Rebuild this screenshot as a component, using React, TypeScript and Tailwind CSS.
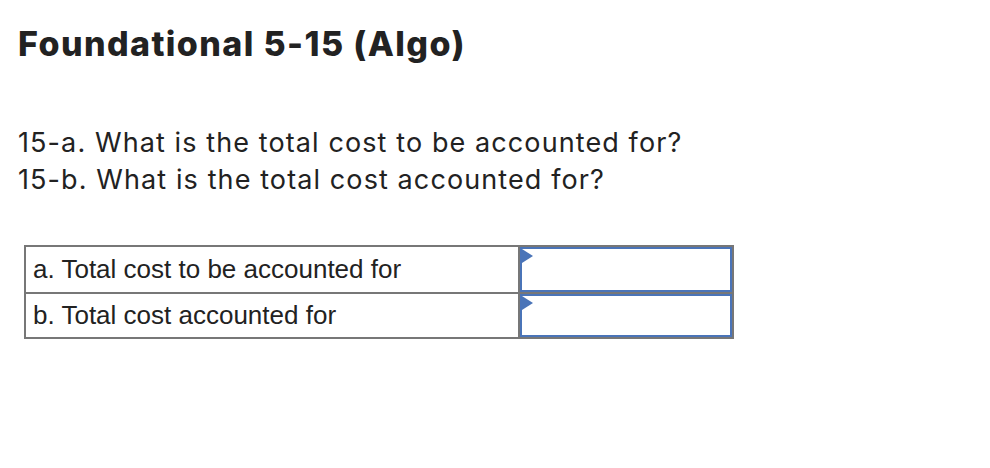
export default function App() {
    const rows = [
        "a. Total cost to be accounted for",
        "b. Total cost accounted for",
    ];

    return (
        <div className="min-h-screen w-[990px] h-[468px] bg-white text-[#222]">
            <div className="pl-[18px] pt-[23px]">
                {/* Title */}
                <h1 className="font-['Inter',sans-serif] font-extrabold text-[34px] leading-[42px] tracking-[1.4px]">
                    Foundational 5-15 (Algo)
                </h1>

                {/* Questions */}
                <div className="mt-[59px] font-['Inter',sans-serif] text-[27px] leading-[37px] tracking-[1.1px]">
                    <p>15-a. What is the total cost to be accounted for?</p>
                    <p>15-b. What is the total cost accounted for?</p>
                </div>

                {/* Answer table */}
                <div className="mt-[47px] ml-[6px] w-[710px] border-2 border-[#777] font-['Liberation_Sans',Arial,sans-serif]">
                    {rows.map((label, i) => (
                        <div
                            key={label}
                            className={`flex h-[45px] ${i > 0 ? "border-t-2 border-[#777]" : ""}`}
                        >
                            <div className="flex-1 flex items-center pl-[7px] text-[26px] border-r-2 border-[#777]">
                                {label}
                            </div>
                            <div className="relative w-[212px] border-2 border-[#4a74b8] bg-white">
                                <svg
                                    className="absolute left-0 top-0"
                                    width="12"
                                    height="14"
                                    viewBox="0 0 12 14"
                                >
                                    <path d="M0 0 L11 7 L0 14 Z" fill="#4a74b8"/>
                                </svg>
                            </div>
                        </div>
                    ))}
                </div>
            </div>
        </div>
    );
}
